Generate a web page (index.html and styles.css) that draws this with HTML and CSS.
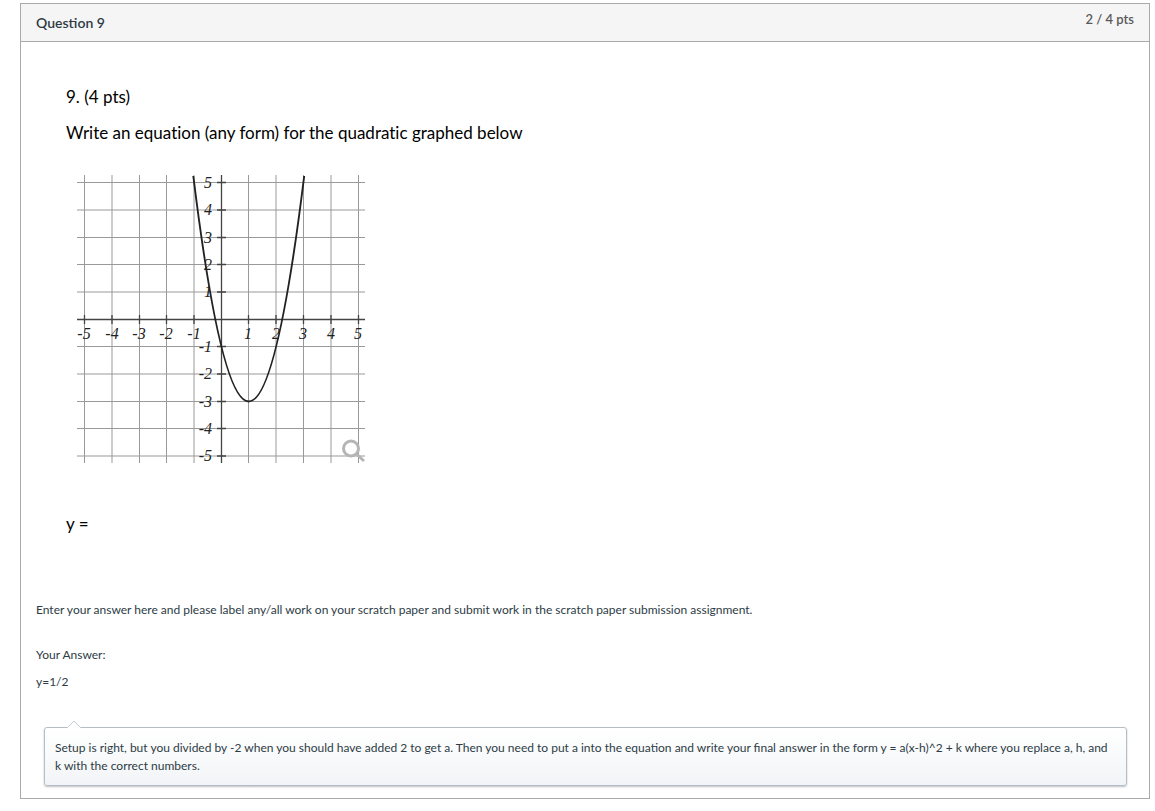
FILE: index.html
```html
<!DOCTYPE html>
<html lang="en">
<head>
    <meta charset="UTF-8">
    <meta name="viewport" content="width=device-width, initial-scale=1.0">
    <title>Question 9</title>
    <link rel="stylesheet" href="styles.css">
</head>
<body>
    <main class="question">
        <header class="question-header">
            <h1 class="question-name">Question 9</h1>
            <span class="points">2 / 4 pts</span>
        </header>

        <div class="question-body">
            <section class="problem">
                <p class="problem-number">9. (4 pts)</p>
                <p class="problem-text">Write an equation (any form) for the quadratic graphed below</p>

                <svg class="graph" viewBox="0 0 288 288" role="img" aria-label="Parabola with vertex (1, -3)">
                    <path class="grid" d="M7.5 0V288M35 0V288M62.5 0V288M89.5 0V288M117 0V288M171.5 0V288M199 0V288M226.5 0V288M254 0V288M281.5 0V288"/>
                    <path class="grid" d="M0 7.5H288M0 35H288M0 62.5H288M0 89.5H288M0 117H288M0 171.5H288M0 199H288M0 226.5H288M0 253.5H288M0 281H288"/>
                    <path class="axis" d="M144.5 0V288M0 144.5H288"/>
                    <path class="tick" d="M7.5 140V149M35 140V149M62.5 140V149M89.5 140V149M117 140V149M171.5 140V149M199 140V149M226.5 140V149M254 140V149M281.5 140V149"/>
                    <path class="tick" d="M140 7.5H149M140 35H149M140 62.5H149M140 89.5H149M140 117H149M140 171.5H149M140 199H149M140 226.5H149M140 253.5H149M140 281H149"/>
                    <g class="x-labels">
                        <text x="7" y="164">-5</text>
                        <text x="35" y="164">-4</text>
                        <text x="62" y="164">-3</text>
                        <text x="89" y="164">-2</text>
                        <text x="117" y="164">-1</text>
                        <text x="171" y="164">1</text>
                        <text x="199" y="164">2</text>
                        <text x="226" y="164">3</text>
                        <text x="254" y="164">4</text>
                        <text x="281" y="164">5</text>
                    </g>
                    <g class="y-labels">
                        <text x="135" y="13">5</text>
                        <text x="135" y="40">4</text>
                        <text x="135" y="68">3</text>
                        <text x="135" y="95">2</text>
                        <text x="135" y="122">1</text>
                        <text x="135" y="177">-1</text>
                        <text x="135" y="204">-2</text>
                        <text x="135" y="232">-3</text>
                        <text x="135" y="259">-4</text>
                        <text x="135" y="286">-5</text>
                    </g>
                    <path class="curve" d="M116.3 1Q171.8 452 227.2 1"/>
                    <g class="magnifier">
                        <circle cx="274" cy="273.5" r="7.5"/>
                        <path d="M279.5 279L287 286"/>
                    </g>
                </svg>

                <p class="problem-answer">y =</p>
            </section>

            <p class="instructions">Enter your answer here and please label any/all work on your scratch paper and submit work in the scratch paper submission assignment.</p>

            <section class="answer">
                <h2 class="answer-label">Your Answer:</h2>
                <p class="answer-text">y=1/2</p>
            </section>

            <aside class="comment">
                <svg class="comment-arrow" viewBox="0 0 14 8" aria-hidden="true">
                    <path d="M0 8L7 1L14 8"/>
                </svg>
                <p class="comment-text">Setup is right, but you divided by -2 when you should have added 2 to get a. Then you need to put a into the equation and write your final answer in the form y = a(x-h)^2 + k where you replace a, h, and k with the correct numbers.</p>
            </aside>
        </div>
    </main>
</body>
</html>
```
FILE: styles.css
```css
* {
    box-sizing: border-box;
}

body {
    margin: 0;
    padding: 3px 5px 12px 20px;
    background: #fff;
    color: #2d3b45;
    font-family: Lato, sans-serif;
    font-size: 12px;
    line-height: 18px;
}

h1, h2, p {
    margin: 0;
}

.question {
    border: 1px solid #aaa;
}

.question-header {
    display: flex;
    justify-content: space-between;
    padding: 6px 15px 10px;
    background: #f5f5f5;
    border-bottom: 1px solid #aaa;
}

.question-name {
    padding-top: 5px;
    font-size: 14px;
    font-weight: 600;
    line-height: 16px;
}

.points {
    color: #595959;
    font-size: 13px;
    font-weight: 600;
}

.question-body {
    padding: 43px 15px 12px;
}

.problem {
    padding-left: 30px;
    color: #000;
    font-size: 17px;
    font-variant-ligatures: none;
    line-height: 24px;
}

.problem-text {
    margin-top: 12px;
}

.graph {
    display: block;
    width: 288px;
    margin: 30px 0 49px 11px;
    font-family: "Liberation Serif", serif;
    font-size: 16px;
    font-style: italic;
}

.graph text {
    fill: #222;
}

.graph path, .magnifier circle {
    fill: none;
}

.grid {
    stroke: #999;
}

.axis, .tick {
    stroke: #444;
    stroke-width: 1.3;
}

.graph .curve {
    stroke: #222;
    stroke-width: 1.9;
}

.x-labels {
    text-anchor: middle;
}

.y-labels {
    text-anchor: end;
}

.magnifier {
    stroke: #b5b5b5;
    stroke-width: 3;
}

.instructions {
    margin-top: 65px;
}

.answer {
    margin-top: 27px;
}

.answer-label {
    font-size: 12px;
    font-weight: normal;
}

.answer-text {
    margin-top: 9px;
}

.comment {
    position: relative;
    margin: 36px 7px 0 8px;
    padding: 11px 10px 10px;
    border: 1px solid #b4bec6;
    border-radius: 3px;
    background: linear-gradient(#fff, #f2f4f7);
    box-shadow: 0 1px 2px rgba(0, 0, 0, 0.25);
}

.comment-arrow {
    position: absolute;
    top: -8px;
    left: 22px;
    width: 14px;
    height: 8px;
}

.comment-arrow path {
    fill: #fff;
    stroke: #c9ced3;
}
```
